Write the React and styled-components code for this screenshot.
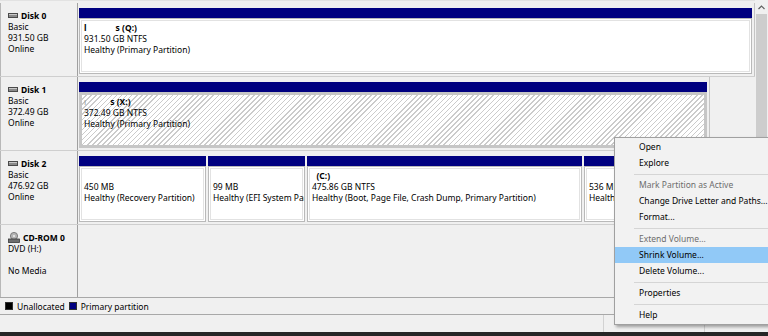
import React from "react";
import styled, { createGlobalStyle, css } from "styled-components";

const GlobalStyle = createGlobalStyle`
    html, body {
        margin: 0;
        padding: 0;
        overflow: hidden;
        background: #f0f0f0;
    }
    body {
        font-family: "Noto Sans", "Liberation Sans", sans-serif;
        font-size: 8.5px;
        color: #000;
    }
`;

const Window = styled.div`
    position: relative;
    width: 768px;
    height: 336px;
    display: flex;
    flex-direction: column;
    overflow: hidden;
`;

const Main = styled.div`
    display: flex;
    height: 297px;
`;

const DiskList = styled.div`
    width: 755px;
    padding-top: 2px;
    border-top: 1px solid #e2e2e2;
    box-sizing: border-box;
`;

const Row = styled.div`
    display: flex;
    height: ${({ $h }) => $h}px;
    border-bottom: ${({ $last }) => ($last ? "none" : "1px solid #cfcfcf")};
`;

const Label = styled.div`
    width: 78px;
    flex: none;
    box-sizing: border-box;
    border-left: 1px solid #b8b8b8;
    border-right: 1px solid #a0a0a0;
    padding: 7px 0 0 7px;
    line-height: 11px;
    white-space: nowrap;
`;

const LabelTitle = styled.div`
    display: flex;
    align-items: center;
    gap: 3px;
    font-weight: 700;
`;

const DiskArea = styled.div`
    width: ${({ $w }) => $w}px;
    flex: none;
    box-sizing: border-box;
    border-right: 1px solid #c4c4c4;
    padding: 5px 2px 2px 1px;
    display: flex;
    gap: 2px;
`;

const Partition = styled.div`
    display: flex;
    flex-direction: column;
    min-width: 0;
    ${({ $w }) =>
        $w
            ? css`
                  width: ${$w}px;
                  flex: none;
              `
            : css`
                  flex: 1;
              `}
`;

const Bar = styled.div`
    height: 10px;
    background: #000080;
    flex: none;
`;

const Body = styled.div`
    flex: 1;
    border: 1px solid #b9b9b9;
    box-shadow: inset 0 0 0 1px #ffffff, inset 0 0 0 2px #e2e2e2;
    background: #fff;
    padding: 3px 4px;
    line-height: 11px;
    overflow: hidden;
    white-space: nowrap;

    ${({ $selected }) =>
        $selected &&
        css`
            border: 3px solid #c6c6c6;
            box-shadow: none;
            padding: 1px 2px;
            background: repeating-linear-gradient(
                135deg,
                #ffffff 0 2.6px,
                #cbcbcb 2.6px 3.6px
            );
        `}
`;

const Name = styled.div`
    font-weight: 700;
`;

const Gap = styled.span`
    display: inline-block;
    width: ${({ $w }) => $w}px;
`;

const Faint = styled.span`
    color: #9a9a9a;
    font-weight: 400;
`;

const ScrollBar = styled.div`
    width: 13px;
    display: flex;
    flex-direction: column;
    align-items: center;
    background: #f0f0f0;
`;

const Thumb = styled.div`
    width: 11px;
    height: 272px;
    margin-top: 2px;
    background: #cdcdcd;
`;

const Legend = styled.div`
    height: 16px;
    border-top: 1px solid #a8a8a8;
    border-bottom: 1px solid #a8a8a8;
    display: flex;
    align-items: center;
    padding-left: 5px;
    gap: 4px;
`;

const LegendItem = styled.div`
    display: flex;
    align-items: center;
    gap: 4px;
`;

const Swatch = styled.span`
    width: 6px;
    height: 6px;
    border: 1px solid #303030;
    background: ${({ $color }) => $color};
`;

const StatusBar = styled.div`
    height: 17px;
    display: flex;
`;

const Pane = styled.div`
    width: ${({ $w }) => ($w ? `${$w}px` : "auto")};
    flex: ${({ $w }) => ($w ? "none" : 1)};
    border-left: ${({ $first }) => ($first ? "none" : "1px solid #d2d2d2")};
`;

const Taskbar = styled.div`
    height: 4px;
    background: #262626;
`;

const Menu = styled.div`
    position: absolute;
    left: 614px;
    top: 137px;
    width: 175px;
    background: #f2f2f2;
    border: 1px solid #a0a0a0;
    padding: 1px 0;
    box-shadow: 2px 2px 3px rgba(0, 0, 0, 0.35);
`;

const MenuItem = styled.div`
    height: 16px;
    line-height: 16px;
    padding-left: 24px;
    white-space: nowrap;
    color: ${({ $disabled }) => ($disabled ? "#6d6d6d" : "#000")};
    background: ${({ $active }) => ($active ? "#91c9f7" : "transparent")};
`;

const MenuSep = styled.div`
    height: 1px;
    margin: 3px 0 2px 19px;
    background: #d5d5d5;
`;

const DiskIcon = () => (
    <svg width="10" height="5" viewBox="0 0 10 5">
        <rect x="0.5" y="0.5" width="9" height="4" fill="#8a8a8a" stroke="#4a4a4a" />
        <rect x="1" y="1" width="8" height="1" fill="#c8c8c8" />
    </svg>
);

const CdIcon = () => (
    <svg width="12" height="11" viewBox="0 0 12 11">
        <circle cx="6" cy="4" r="3.6" fill="#b4b4b4" stroke="#6a6a6a" strokeWidth="0.8" />
        <circle cx="6" cy="4" r="1" fill="#f0f0f0" />
        <rect x="0.5" y="7" width="11" height="3.5" fill="#6e6e6e" stroke="#3a3a3a" strokeWidth="0.8" />
    </svg>
);

const ArrowUp = () => (
    <svg width="9" height="9" viewBox="0 0 9 9" style={{ marginTop: 3 }}>
        <path d="M1.5 6 L4.5 3 L7.5 6" fill="none" stroke="#606060" strokeWidth="1.2" />
    </svg>
);

const disks = [
    {
        title: "Disk 0",
        lines: ["Basic", "931.50 GB", "Online"],
        width: 677,
        parts: [
            {
                name: (
                    <>
                        l<Gap $w={29} />s (Q:)
                    </>
                ),
                size: "931.50 GB NTFS",
                status: "Healthy (Primary Partition)",
            },
        ],
    },
    {
        title: "Disk 1",
        lines: ["Basic", "372.49 GB", "Online"],
        width: 632,
        parts: [
            {
                selected: true,
                name: (
                    <>
                        <Faint>ı</Faint>
                        <Gap $w={24} />s (X:)
                    </>
                ),
                size: "372.49 GB NTFS",
                status: "Healthy (Primary Partition)",
            },
        ],
    },
    {
        title: "Disk 2",
        lines: ["Basic", "476.92 GB", "Online"],
        width: 677,
        parts: [
            { w: 127, size: "450 MB", status: "Healthy (Recovery Partition)" },
            { w: 97, size: "99 MB", status: "Healthy (EFI System Partition)" },
            {
                w: 275,
                name: <>&nbsp;&nbsp;(C:)</>,
                size: "475.86 GB NTFS",
                status: "Healthy (Boot, Page File, Crash Dump, Primary Partition)",
            },
            { size: "536 MB", status: "Healthy (Recovery Partition)" },
        ],
    },
];

const menu = [
    { t: "Open" },
    { t: "Explore" },
    "sep",
    { t: "Mark Partition as Active", disabled: true },
    { t: "Change Drive Letter and Paths..." },
    { t: "Format..." },
    "sep",
    { t: "Extend Volume...", disabled: true },
    { t: "Shrink Volume...", active: true },
    { t: "Delete Volume..." },
    "sep",
    { t: "Properties" },
    "sep",
    { t: "Help" },
];

const App = () => {
    return (
        <Window>
            <GlobalStyle />
            <Main>
                <DiskList>
                    {disks.map((d) => (
                        <Row key={d.title} $h={73}>
                            <Label>
                                <LabelTitle>
                                    <DiskIcon />
                                    {d.title}
                                </LabelTitle>
                                {d.lines.map((l) => (
                                    <div key={l}>{l}</div>
                                ))}
                            </Label>
                            <DiskArea $w={d.width}>
                                {d.parts.map((p, i) => (
                                    <Partition key={i} $w={p.w}>
                                        <Bar />
                                        <Body $selected={p.selected}>
                                            <Name>{p.name || "\u00a0"}</Name>
                                            <div>{p.size}</div>
                                            <div>{p.status}</div>
                                        </Body>
                                    </Partition>
                                ))}
                            </DiskArea>
                        </Row>
                    ))}
                    <Row $h={72} $last>
                        <Label>
                            <LabelTitle>
                                <CdIcon />
                                CD-ROM 0
                            </LabelTitle>
                            <div>DVD (H:)</div>
                            <div>&nbsp;</div>
                            <div>No Media</div>
                        </Label>
                    </Row>
                </DiskList>
                <ScrollBar>
                    <ArrowUp />
                    <Thumb />
                </ScrollBar>
            </Main>
            <Legend>
                <LegendItem>
                    <Swatch $color="#000" />
                    Unallocated
                </LegendItem>
                <LegendItem>
                    <Swatch $color="#000080" />
                    Primary partition
                </LegendItem>
            </Legend>
            <StatusBar>
                <Pane $w={603} $first />
                <Pane $w={100} />
                <Pane />
            </StatusBar>
            <Taskbar />

            <Menu>
                {menu.map((m, i) =>
                    m === "sep" ? (
                        <MenuSep key={i} />
                    ) : (
                        <MenuItem
                            key={i}
                            $disabled={m.disabled}
                            $active={m.active}
                        >
                            {m.t}
                        </MenuItem>
                    ),
                )}
            </Menu>
        </Window>
    );
};

export default App;
